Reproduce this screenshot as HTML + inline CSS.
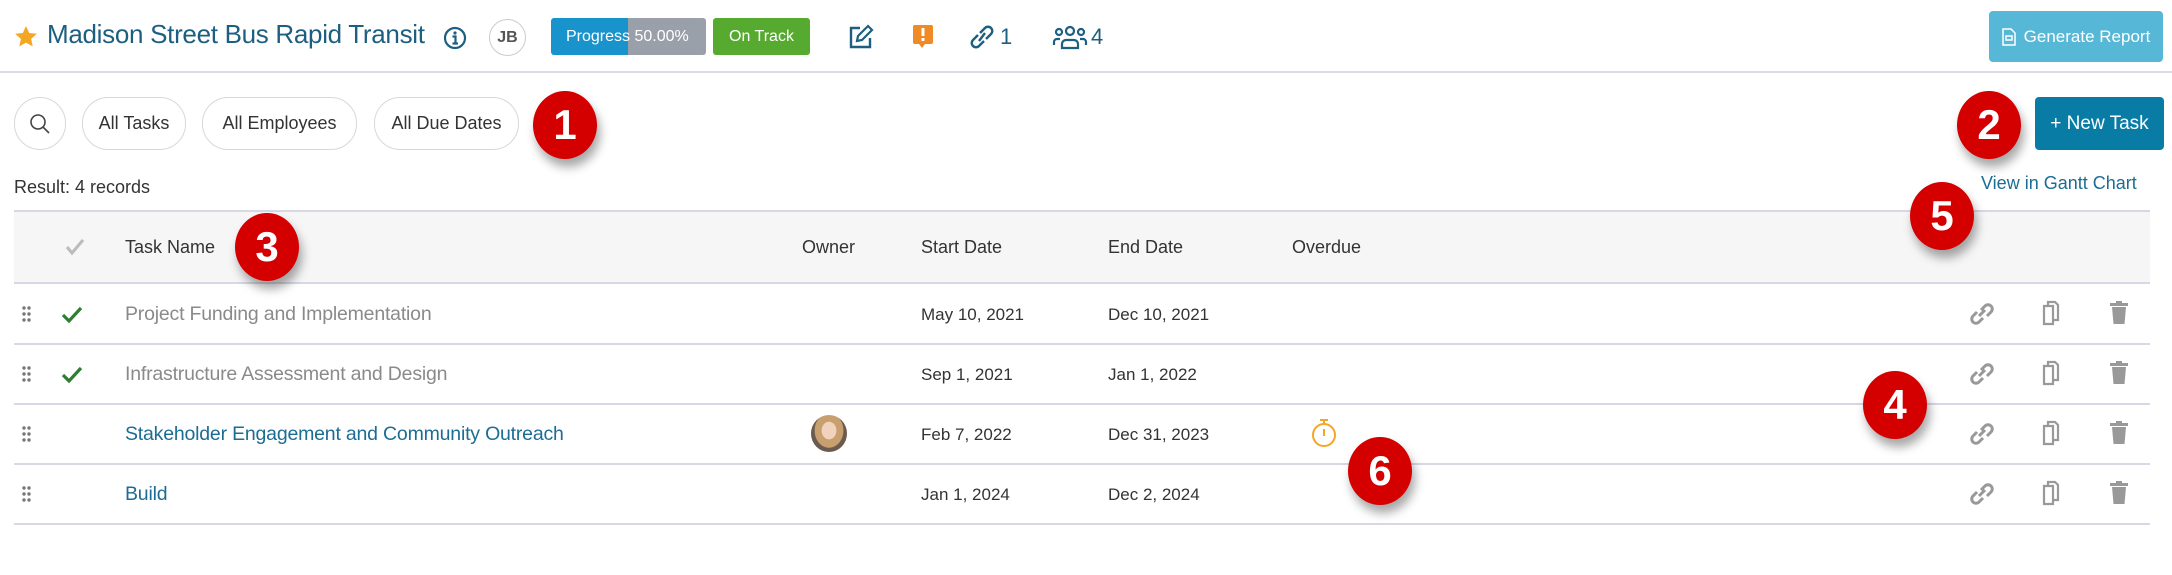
<!DOCTYPE html>
<html><head><meta charset="utf-8"><style>
*{box-sizing:border-box;margin:0;padding:0}
body{width:2172px;height:575px;background:#fff;font-family:"Liberation Sans",sans-serif;position:relative;overflow:hidden;color:#333}
.a{position:absolute}
.hdr{left:0;top:0;width:2172px;height:73px;border-bottom:2px solid #dcdce8}
.title{left:47px;top:19px;font-size:26px;color:#1d5f80;letter-spacing:-0.3px}
.pill{border:1.5px solid #d8d8d8;border-radius:26px;height:53px;top:97px;font-size:18px;color:#333;display:flex;align-items:center;justify-content:center}
.badge{width:64px;height:68px;border-radius:50%;background:#d40000;color:#fff;font-weight:bold;font-size:42px;display:flex;align-items:center;justify-content:center;box-shadow:3px 8px 10px rgba(0,0,0,.35)}
.th{top:210px;left:14px;width:2136px;height:74px;background:#f6f6f6;border-top:2px solid #d6d8e6;border-bottom:2px solid #d6d8e6}
.line{left:14px;width:2136px;height:2px;background:#d6d8e6}
.t{font-size:18px;color:#333}
.n{font-size:19.5px;letter-spacing:-0.2px}
.d{font-size:17px}
.g{color:#8a8a8a}
.lk{color:#1b6d94}
</style></head><body>
<div class="a hdr"></div>
<svg class="a" style="left:14px;top:25px" width="24" height="24" viewBox="0 0 24 24"><path d="M12 1l3.2 7 7.6.8-5.7 5.1 1.6 7.5L12 17.6 5.3 21.4l1.6-7.5L1.2 8.8 8.8 8z" fill="#f5a623"/></svg>
<div class="a title">Madison Street Bus Rapid Transit</div>
<svg class="a" style="left:443px;top:26px" width="24" height="24" viewBox="0 0 24 24"><circle cx="12" cy="12" r="10" fill="none" stroke="#1d5f80" stroke-width="2.2"/><circle cx="12" cy="7" r="1.6" fill="#1d5f80"/><path d="M9.5 10.5h3v7M9.5 17.5h5.5" stroke="#1d5f80" stroke-width="2.2" fill="none"/></svg>
<div class="a" style="left:489px;top:19px;width:37px;height:37px;border:1.5px solid #ccc;border-radius:50%;font-size:16px;font-weight:bold;color:#555;display:flex;align-items:center;justify-content:center">JB</div>
<div class="a" style="left:551px;top:18px;width:155px;height:37px;border-radius:3px;overflow:hidden;font-size:16px;color:#fff"><div class="a" style="background:#1993cb;left:0;top:0;width:77px;height:37px"></div><div class="a" style="background:#9aa0aa;left:77px;top:0;width:78px;height:37px"></div><div class="a" style="left:15px;top:10px;white-space:nowrap">Progress 50.00%</div></div>
<div class="a" style="left:713px;top:18px;width:97px;height:37px;border-radius:3px;background:#56aa2f;color:#fff;font-size:16px;display:flex;align-items:center;justify-content:center">On Track</div>
<svg class="a" style="left:848px;top:24px" width="26" height="26" viewBox="0 0 26 26"><path d="M12 4H3v19h19v-9" fill="none" stroke="#1d5f80" stroke-width="2.4"/><path d="M9 17l1-5 10-10 4 4-10 10z" fill="none" stroke="#1d5f80" stroke-width="2.2"/></svg>
<svg class="a" style="left:912px;top:24px" width="22" height="26" viewBox="0 0 22 26"><path d="M3 1h16a2 2 0 012 2v15a2 2 0 01-2 2h-6l-3 4-3-4H3a2 2 0 01-2-2V3a2 2 0 012-2z" fill="#f08a24"/><rect x="9.5" y="4" width="3" height="8" fill="#fff"/><rect x="9.5" y="14" width="3" height="3" fill="#fff"/></svg>
<svg class="a" style="left:970px;top:24px" width="24" height="26" viewBox="0 0 24 26"><path d="M10 9l5-5a4 4 0 016 6l-5 5M14 17l-5 5a4 4 0 01-6-6l5-5M9 17l6-8" fill="none" stroke="#1d5f80" stroke-width="2.4"/></svg>
<div class="a" style="left:1000px;top:24px;font-size:22px;color:#1d5f80">1</div>
<svg class="a" style="left:1052px;top:24px" width="36" height="26" viewBox="0 0 36 26"><g fill="none" stroke="#1d5f80" stroke-width="2.2"><circle cx="18" cy="7" r="4"/><circle cx="7" cy="8" r="3"/><circle cx="29" cy="8" r="3"/><path d="M10 24v-4a4 4 0 014-4h8a4 4 0 014 4v4zM2 21v-3a3 3 0 013-3h3M34 21v-3a3 3 0 00-3-3h-3"/></g></svg>
<div class="a" style="left:1091px;top:24px;font-size:22px;color:#1d5f80">4</div>
<div class="a" style="left:1989px;top:11px;width:174px;height:51px;border-radius:4px;background:#56b7d7;color:#fff;font-size:17px;display:flex;align-items:center;justify-content:center;gap:8px"><svg width="14" height="18" viewBox="0 0 14 18"><path d="M1 1h8l4 4v12H1z M4 8h6v4H4z" fill="none" stroke="#fff" stroke-width="1.5"/></svg>Generate Report</div>

<div class="a pill" style="left:14px;width:52px"><svg width="22" height="22" viewBox="0 0 22 22"><circle cx="9" cy="9" r="7" fill="none" stroke="#444" stroke-width="1.6"/><path d="M14 14l6 6" stroke="#444" stroke-width="1.6"/></svg></div>
<div class="a pill" style="left:82px;width:104px">All Tasks</div>
<div class="a pill" style="left:202px;width:155px">All Employees</div>
<div class="a pill" style="left:374px;width:145px">All Due Dates</div>
<div class="a" style="left:2035px;top:97px;width:129px;height:53px;border-radius:4px;background:#087ca5;color:#fff;font-size:19px;display:flex;align-items:center;justify-content:center">+ New Task</div>
<div class="a t" style="left:14px;top:177px">Result: 4 records</div>
<div class="a lk" style="left:1981px;top:173px;font-size:18px">View in Gantt Chart</div>

<div class="a th"></div>
<svg class="a" style="left:65px;top:238px" width="20" height="18" viewBox="0 0 20 18"><path d="M2 9l5 6L18 2" fill="none" stroke="#bbb" stroke-width="3"/></svg>
<div class="a t" style="left:125px;top:237px">Task Name</div>
<div class="a t" style="left:802px;top:237px">Owner</div>
<div class="a t" style="left:921px;top:237px">Start Date</div>
<div class="a t" style="left:1108px;top:237px">End Date</div>
<div class="a t" style="left:1292px;top:237px">Overdue</div>

<div class="a line" style="top:343px"></div>
<div class="a line" style="top:403px"></div>
<div class="a line" style="top:463px"></div>
<div class="a line" style="top:523px"></div>

<svg class="a" style="left:22px;top:306px" width="10" height="200" viewBox="0 0 10 200"><defs><g id="dr" fill="#777"><circle cx="2" cy="2" r="1.7"/><circle cx="7" cy="2" r="1.7"/><circle cx="2" cy="8" r="1.7"/><circle cx="7" cy="8" r="1.7"/><circle cx="2" cy="14" r="1.7"/><circle cx="7" cy="14" r="1.7"/></g></defs><use href="#dr"/><use href="#dr" y="60"/><use href="#dr" y="120"/><use href="#dr" y="180"/></svg>
<svg class="a" style="left:61px;top:306px" width="22" height="18" viewBox="0 0 22 18"><path d="M2 9l6 6L20 2" fill="none" stroke="#2e7d32" stroke-width="3.2"/></svg>
<svg class="a" style="left:61px;top:366px" width="22" height="18" viewBox="0 0 22 18"><path d="M2 9l6 6L20 2" fill="none" stroke="#2e7d32" stroke-width="3.2"/></svg>
<div class="a t n g" style="left:125px;top:303px">Project Funding and Implementation</div>
<div class="a t n g" style="left:125px;top:363px">Infrastructure Assessment and Design</div>
<div class="a t n lk" style="left:125px;top:423px">Stakeholder Engagement and Community Outreach</div>
<div class="a t n lk" style="left:125px;top:483px">Build</div>
<div class="a" style="left:811px;top:415px;width:36px;height:37px;border-radius:50%;background:radial-gradient(ellipse at 50% 42%,#f1d2bc 0 28%,#c8a070 30% 55%,#6b5a4e 58%)"></div>
<div class="a t d" style="left:921px;top:305px">May 10, 2021</div>
<div class="a t d" style="left:921px;top:365px">Sep 1, 2021</div>
<div class="a t d" style="left:921px;top:425px">Feb 7, 2022</div>
<div class="a t d" style="left:921px;top:485px">Jan 1, 2024</div>
<div class="a t d" style="left:1108px;top:305px">Dec 10, 2021</div>
<div class="a t d" style="left:1108px;top:365px">Jan 1, 2022</div>
<div class="a t d" style="left:1108px;top:425px">Dec 31, 2023</div>
<div class="a t d" style="left:1108px;top:485px">Dec 2, 2024</div>
<svg class="a" style="left:1311px;top:418px" width="26" height="30" viewBox="0 0 26 30"><circle cx="13" cy="17" r="11" fill="none" stroke="#f5a623" stroke-width="2"/><path d="M9 2h8M13 2v4M13 11v7" stroke="#f5a623" stroke-width="2"/></svg>

<svg class="a" style="left:1960px;top:300px" width="200" height="220" viewBox="0 0 200 220">
<defs><g id="ic">
<path d="M12 10l4-4a4 4 0 016 6l-4 4M14 18l-4 4a4 4 0 01-6-6l4-4M10 16l6-6" fill="none" stroke="#999" stroke-width="3" transform="translate(9,0)"/>
<g transform="translate(80,0)" fill="none" stroke="#999" stroke-width="2.2"><path d="M4 6h9l0 18H4z"/><path d="M8 6V2h7l3 3v15h-5"/></g>
<g transform="translate(148,0)" fill="#999"><rect x="2" y="3" width="18" height="3"/><rect x="8" y="1" width="6" height="3"/><path d="M4 7h14l-1.5 17h-11z"/></g>
</g></defs>
<use href="#ic" y="0"/><use href="#ic" y="60"/><use href="#ic" y="120"/><use href="#ic" y="180"/>
</svg>

<div class="a badge" style="left:533px;top:91px">1</div>
<div class="a badge" style="left:1957px;top:91px">2</div>
<div class="a badge" style="left:235px;top:213px">3</div>
<div class="a badge" style="left:1863px;top:371px">4</div>
<div class="a badge" style="left:1910px;top:182px">5</div>
<div class="a badge" style="left:1348px;top:437px">6</div>
</body></html>
